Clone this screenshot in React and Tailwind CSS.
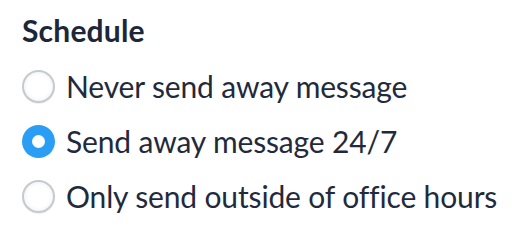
import React, { useState } from 'react';

const options = [
  { id: 'never', label: 'Never send away message' },
  { id: 'always', label: 'Send away message 24/7' },
  { id: 'outside', label: 'Only send outside of office hours' },
];

const Radio = ({ checked }) =>
  checked ? (
    <span className="flex h-[33px] w-[33px] shrink-0 items-center justify-center rounded-full bg-[#2a9df4]">
      <span className="h-[13px] w-[13px] rounded-full bg-white" />
    </span>
  ) : (
    <span className="h-[33px] w-[33px] shrink-0 rounded-full border-2 border-[#c6c9ce] bg-[radial-gradient(circle,#ffffff_50%,#e8eaed_100%)] shadow-[0_1px_1px_rgba(0,0,0,0.06)]" />
  );

export default function App() {
  const [value, setValue] = useState('always');

  return (
    <div className="bg-white w-[523px] h-[241px] pl-[22px] pt-[12px] text-[#1f2b3c] font-['Lato',sans-serif]">
      <h3 className="text-[30px] font-bold leading-[36px] tracking-[0.2px] text-[#1c2738]">Schedule</h3>
      <div className="mt-[22px] flex flex-col gap-[22px]">
        {options.map(opt => (
          <label key={opt.id} className="flex items-center gap-[11px] cursor-pointer" onClick={() => setValue(opt.id)}>
            <Radio checked={value === opt.id} />
            <span className="text-[30px] leading-[33px] tracking-[-0.15px]">{opt.label}</span>
          </label>
        ))}
      </div>
    </div>
  );
}
